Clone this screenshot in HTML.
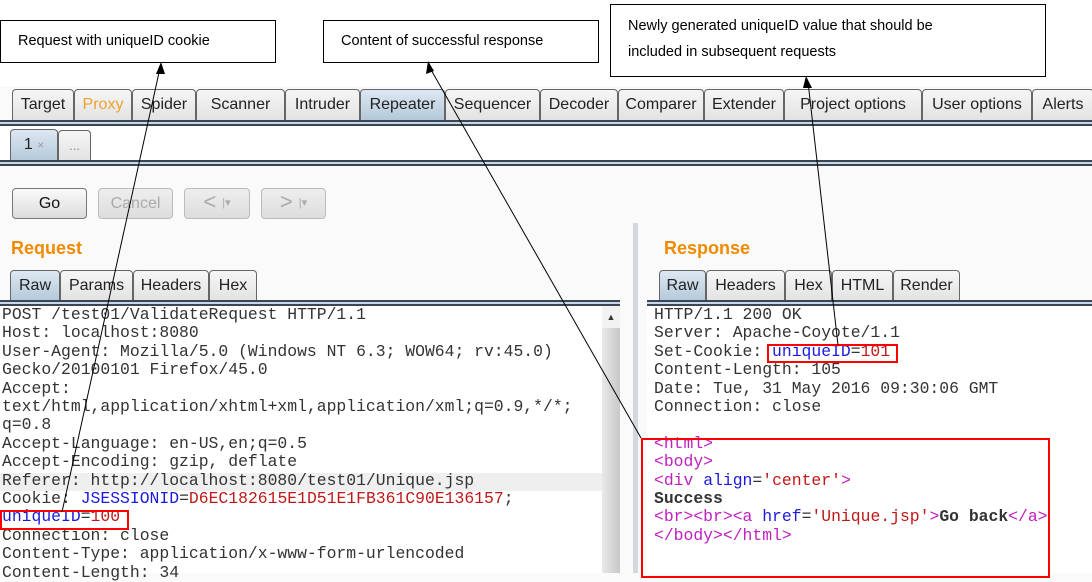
<!DOCTYPE html>
<html><head><meta charset="utf-8"><style>
*{margin:0;padding:0;box-sizing:border-box}
body{width:1092px;height:573px;overflow:hidden;background:#fafafa;position:relative;font-family:"Liberation Sans",sans-serif}
.a{position:absolute}
.tab{position:absolute;height:31px;border:1px solid #666;border-bottom:none;border-radius:4px 4px 0 0;background:linear-gradient(#f6f6f6,#e2e2e2);font-size:16px;color:#222;text-align:center;line-height:30px;white-space:nowrap;overflow:hidden}
.sel{background:linear-gradient(#dde8f2,#b4c8da)}
.dl{position:absolute;height:6px;border-top:2px solid #3a4656;border-bottom:2px solid #3a4656;background:#c8d8e8}
.btn{position:absolute;height:31px;border:1px solid #777;border-radius:4px;background:linear-gradient(#fafafa,#dcdcdc);font-size:16px;text-align:center;line-height:29px;color:#111}
.dis{border-color:#bbb;color:#aaa;background:linear-gradient(#eee,#ddd)}
.mono{font-family:"Liberation Mono",monospace;font-size:16.4px;line-height:18.4px;color:#333;white-space:pre}
.b{color:#1a1ae0}.r{color:#c01818}.p{color:#c020c0}.note{position:absolute;background:#fff;border:1.5px solid #000;font-size:14.5px;color:#000;padding-left:17px}
.hd{position:absolute;color:#f08a00;font-weight:bold;font-size:18px}
</style></head><body>
<div class="a" style="left:0;top:0;width:1092px;height:86px;background:#fff"></div>
<div class="tab" style="left:12px;top:89px;width:62px">Target</div>
<div class="tab" style="left:74px;top:89px;width:58px;color:#f0a030">Proxy</div>
<div class="tab" style="left:132px;top:89px;width:64px">Spider</div>
<div class="tab" style="left:196px;top:89px;width:89px">Scanner</div>
<div class="tab" style="left:285px;top:89px;width:75px">Intruder</div>
<div class="tab sel" style="left:360px;top:89px;width:85px">Repeater</div>
<div class="tab" style="left:445px;top:89px;width:95px">Sequencer</div>
<div class="tab" style="left:540px;top:89px;width:78px">Decoder</div>
<div class="tab" style="left:618px;top:89px;width:86px">Comparer</div>
<div class="tab" style="left:704px;top:89px;width:80px">Extender</div>
<div class="tab" style="left:784px;top:89px;width:138px">Project options</div>
<div class="tab" style="left:922px;top:89px;width:110px">User options</div>
<div class="tab" style="left:1032px;top:89px;width:62px">Alerts</div>
<div class="dl" style="left:0;top:120px;width:1092px"></div>
<div class="a" style="left:0;top:126px;width:1092px;height:34px;background:#fff"></div>
<div class="tab sel" style="left:10px;top:129px;width:48px;height:32px;font-size:16px">1 <span style="color:#999;font-size:12px">×</span></div>
<div class="tab" style="left:58px;top:130px;width:33px;height:31px;color:#888;font-size:13px">...</div>
<div class="dl" style="left:0;top:160px;width:1092px"></div>
<div class="btn" style="left:12px;top:188px;width:75px">Go</div>
<div class="btn dis" style="left:98px;top:188px;width:75px">Cancel</div>
<div class="btn dis" style="left:184px;top:188px;width:66px;font-size:22px;line-height:26px">&lt; <span style="font-size:11px;vertical-align:middle">|▾</span></div>
<div class="btn dis" style="left:261px;top:188px;width:65px;font-size:22px;line-height:26px">&gt; <span style="font-size:11px;vertical-align:middle">|▾</span></div>
<div class="a" style="left:633px;top:223px;width:5px;height:350px;background:#d4d8de"></div>
<div class="hd" style="left:11px;top:238px">Request</div>
<div class="hd" style="left:664px;top:238px">Response</div>
<div class="tab sel" style="left:10px;top:270px;width:50px">Raw</div>
<div class="tab" style="left:60px;top:270px;width:73px">Params</div>
<div class="tab" style="left:133px;top:270px;width:76px">Headers</div>
<div class="tab" style="left:209px;top:270px;width:48px">Hex</div>
<div class="dl" style="left:0;top:300px;width:620px"></div>
<div class="tab sel" style="left:659px;top:270px;width:47px">Raw</div>
<div class="tab" style="left:706px;top:270px;width:79px">Headers</div>
<div class="tab" style="left:785px;top:270px;width:47px">Hex</div>
<div class="tab" style="left:832px;top:270px;width:61px">HTML</div>
<div class="tab" style="left:893px;top:270px;width:67px">Render</div>
<div class="dl" style="left:647px;top:300px;width:445px"></div>
<div class="a" style="left:0;top:306px;width:602px;height:267px;background:#fff"></div>
<div class="a" style="left:0;top:473px;width:602px;height:18px;background:#efefef"></div>
<div class="a" style="left:602px;top:306px;width:18px;height:267px;background:linear-gradient(90deg,#e8e8e8,#c8c8c8)"></div>
<div class="a" style="left:602px;top:306px;width:18px;height:22px;background:#f2f2f2;font-size:9px;text-align:center;line-height:22px;color:#333">▲</div>
<div class="a" style="left:647px;top:306px;width:445px;height:267px;background:#fff"></div>
<div class="a mono" style="left:2px;top:306px">POST /test01/ValidateRequest HTTP/1.1
Host: localhost:8080
User-Agent: Mozilla/5.0 (Windows NT 6.3; WOW64; rv:45.0)
Gecko/20100101 Firefox/45.0
Accept:
text/html,application/xhtml+xml,application/xml;q=0.9,*/*;
q=0.8
Accept-Language: en-US,en;q=0.5
Accept-Encoding: gzip, deflate
Referer: http://localhost:8080/test01/Unique.jsp
Cookie: <span class="b">JSESSIONID</span>=<span class="r">D6EC182615E1D51E1FB361C90E136157</span>;
<span class="b">uniqueID</span>=<span class="r">100</span>
Connection: close
Content-Type: application/x-www-form-urlencoded
Content-Length: 34</div>
<div class="a" style="left:0;top:510px;width:129px;height:20px;border:2px solid #f00"></div>
<div class="a mono" style="left:654px;top:306px">HTTP/1.1 200 OK
Server: Apache-Coyote/1.1
Set-Cookie: <span class="b">uniqueID</span>=<span class="r">101</span>
Content-Length: 105
Date: Tue, 31 May 2016 09:30:06 GMT
Connection: close

<span class="p">&lt;html&gt;</span>
<span class="p">&lt;body&gt;</span>
<span class="p">&lt;div</span> <span class="b">align</span>=<span class="r">'center'</span><span class="p">&gt;</span>
<b>Success</b>
<span class="p">&lt;br&gt;&lt;br&gt;&lt;a</span> <span class="b">href</span>=<span class="r">'Unique.jsp'</span><span class="p">&gt;</span><b>Go back</b><span class="p">&lt;/a&gt;</span>
<span class="p">&lt;/body&gt;&lt;/html&gt;</span></div>
<div class="a" style="left:767px;top:344px;width:131px;height:19px;border:2px solid #f00"></div>
<div class="a" style="left:641px;top:438px;width:409px;height:140px;border:2px solid #f00"></div>
<div class="note" style="left:0;top:20px;width:276px;height:43px;line-height:41px">Request with uniqueID cookie</div>
<div class="note" style="left:323px;top:20px;width:276px;height:43px;line-height:41px">Content of successful response</div>
<div class="note" style="left:610px;top:4px;width:436px;height:73px;line-height:26px;padding-top:8px">Newly generated uniqueID value that should be<br>included in subsequent requests</div>
<svg class="a" style="left:0;top:0" width="1092" height="573">
<g stroke="#000" stroke-width="1"><line x1="160" y1="68" x2="62" y2="512"/><line x1="430" y1="68" x2="641" y2="438"/><line x1="808" y1="82" x2="838" y2="345"/></g>
<polygon points="161,62 156,74 165,74"/><polygon points="428,61 426,74 434,71"/><polygon points="806,76 803,88 812,88"/>
</svg>
</body></html>
